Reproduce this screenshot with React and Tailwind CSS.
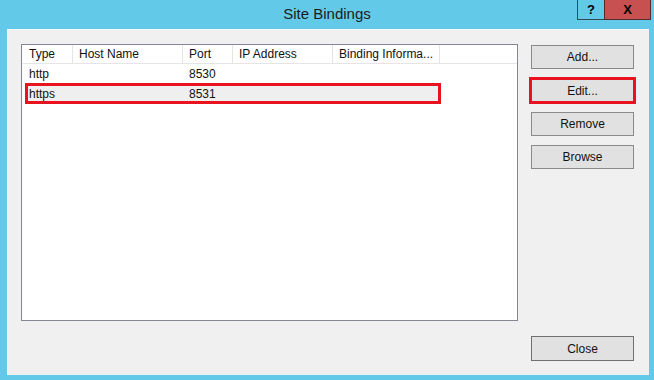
const columns = [
  { label: "Type", width: "w-[51px] pl-[7px]" },
  { label: "Host Name", width: "w-[110px] pl-[6px]" },
  { label: "Port", width: "w-[50px] pl-[6px]" },
  { label: "IP Address", width: "w-[100px] pl-[6px]" },
  { label: "Binding Informa...", width: "w-[107px] pl-[6px]" },
];

const bindings = [
  { type: "http", host: "", port: "8530", ip: "", info: "" },
  { type: "https", host: "", port: "8531", ip: "", info: "" },
];

// One row of the bindings list
const BindingRow = ({ row, marked }) => (
  <div className="relative flex h-[20px] items-center">
    {marked && (
      <div className="absolute left-[3px] top-[-1px] h-[21px] w-[416px] border-[3px] border-[#e8131f] bg-[#efefef]" />
    )}
    {[row.type, row.host, row.port, row.ip, row.info].map((value, i) => (
      <div key={i} className={`relative shrink-0 ${columns[i].width} ${i < 4 ? "border-r border-transparent" : ""}`}>
        {value}
      </div>
    ))}
  </div>
);

const DialogButton = ({ children, className = "" }) => (
  <button className={`flex w-[103px] items-center justify-center border border-[#8a8a8a] bg-[#e1e1e1] text-[12px] text-[#111] ${className}`}>
    {children}
  </button>
);

export default function App() {
  return (
    <div
      className="flex h-[380px] w-[654px] flex-col bg-[#63c9e9]"
      style={{ fontFamily: '"Liberation Sans", Arial, sans-serif' }}
    >
      {/* Title bar */}
      <div className="relative flex h-[29px] shrink-0 items-center justify-center pb-[1px]">
        <span className="text-[15px] text-[#1b1b1b]">Site Bindings</span>
        <div className="absolute right-[3px] top-0 flex h-[20px]">
          <div className="flex w-[27px] items-center justify-center border-b border-l border-[#2e4a55] text-[13px] font-bold text-black">
            ?
          </div>
          <div className="flex w-[47px] items-center justify-center border-b border-r border-l border-[#5a2a2a] bg-[#c75050] text-[13px] font-bold text-black">
            X
          </div>
        </div>
      </div>

      {/* Client area */}
      <div className="ml-[7px] mr-[5px] mb-[5px] flex flex-1 border-l border-t border-[#f8f8f8] bg-[#f0f0f0]">
        <div className="flex flex-1 flex-col pl-[13px] pt-[14px] pb-[54px]">
          {/* Bindings list */}
          <div className="h-[277px] w-[497px] border border-[#828790] bg-white text-[12px] text-[#111]">
            <div className="flex h-[19px] items-center border-b border-[#e5e5e5]">
              {columns.map((col) => (
                <div key={col.label} className={`flex h-full shrink-0 items-center border-r border-[#e5e5e5] ${col.width}`}>
                  {col.label}
                </div>
              ))}
            </div>
            {bindings.map((row, i) => (
              <BindingRow key={row.port} row={row} marked={i === 1} />
            ))}
          </div>
        </div>

        {/* Buttons column */}
        <div className="flex w-[118px] flex-col pt-[15px] pb-[14px]">
          <DialogButton className="h-[24px]">Add...</DialogButton>
          <DialogButton className="mt-[8px] -ml-[2px] h-[27px] w-[107px] border-[3px] border-[#e8131f]">
            Edit...
          </DialogButton>
          <DialogButton className="mt-[8px] h-[24px]">Remove</DialogButton>
          <DialogButton className="mt-[9px] h-[24px]">Browse</DialogButton>
          <DialogButton className="mt-auto h-[25px] border-[#707070]">Close</DialogButton>
        </div>
      </div>
    </div>
  );
}
